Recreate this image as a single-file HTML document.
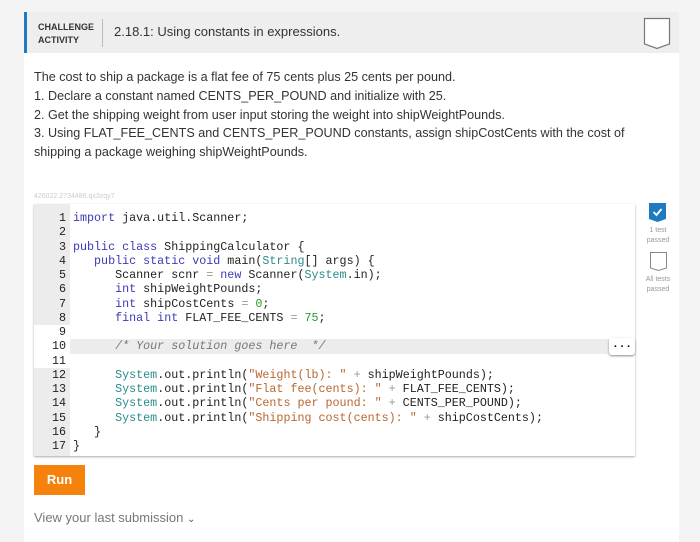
<!DOCTYPE html>
<html><head><style>
body{margin:0;width:700px;height:526px;background:#f4f4f4;font-family:"Liberation Sans",sans-serif;overflow:hidden;position:relative}
.card{position:absolute;left:24px;top:12px;width:655px;height:530px;background:#fff}
.in{position:absolute;left:0;top:3px;width:655px;height:520px}
.hdr{position:absolute;left:0;top:-3px;width:655px;height:41px;background:#eeeeee;border-left:3px solid #1f7bc1;box-sizing:border-box}
.lbl{position:absolute;left:11px;top:9px;font-size:9px;font-weight:bold;line-height:13px;color:#333}
.div{position:absolute;left:75px;top:7px;width:1px;height:28px;background:#bbb}
.ttl{position:absolute;left:87px;top:12px;font-size:13px;color:#333}
.desc{position:absolute;left:10px;top:53px;font-size:12.6px;line-height:18.8px;color:#333}
.id{position:absolute;left:10px;top:178px;font-size:7px;color:#ccc}
.ed{position:absolute;left:10px;top:189px;width:601px;height:252px;background:#fff;box-shadow:0 1px 2px #aaa;font-family:"Liberation Mono",monospace;font-size:11.7px}
.g{position:absolute;left:0;top:0;width:36px;height:252px;background:#ececec}
.w{position:absolute;left:0;width:36px;height:43px;top:121px;background:#fff}
.hl{position:absolute;left:36px;top:135px;width:565px;height:15px;background:#ececec}
.ln{position:absolute;left:0;top:7px;width:32px;text-align:right;line-height:14.25px;color:#222;white-space:pre}
.code{position:absolute;left:39px;top:7px;line-height:14.25px;color:#222;white-space:pre}
.k{color:#3d3ab8}.t{color:#2a8b8b}.s{color:#b8672f}.n{color:#2c9a2c}.c{color:#777;font-style:italic}.o{color:#999}
.dots{position:absolute;left:575px;top:134px;width:26px;height:17px;background:#fff;border-radius:3px;box-shadow:0 1px 2px #888;font-size:11px;font-weight:bold;text-align:center;line-height:14px}
.run{position:absolute;left:10px;top:450px;width:51px;height:30px;background:#f5820d;color:#fff;font-weight:bold;font-size:13px;text-align:center;line-height:30px}
.view{position:absolute;left:10px;top:495px;font-size:13px;color:#777}
.sm{position:absolute;font-size:7px;color:#999;text-align:center;width:40px;line-height:10px}
</style></head><body>
<div class="card"><div class="in">
<div class="hdr"><div class="lbl">CHALLENGE<br>ACTIVITY</div><div class="div"></div><div class="ttl">2.18.1: Using constants in expressions.</div>
<svg style="position:absolute;left:616px;top:5px" width="28" height="33"><path d="M1.5 1.5H26.5V27L14 31.5L1.5 27Z" fill="#fff" stroke="#777" stroke-width="1.2"/></svg></div>
<div class="desc">The cost to ship a package is a flat fee of 75 cents plus 25 cents per pound.<br>1. Declare a constant named CENTS_PER_POUND and initialize with 25.<br>2. Get the shipping weight from user input storing the weight into shipWeightPounds.<br>3. Using FLAT_FEE_CENTS and CENTS_PER_POUND constants, assign shipCostCents with the cost of<br>shipping a package weighing shipWeightPounds.</div>
<div class="id">426022.2734486.qx3zqy7</div>
<div class="ed"><div class="g"></div><div class="w"></div><div class="hl"></div>
<div class="ln">1
2
3
4
5
6
7
8
9
10
11
12
13
14
15
16
17</div>
<div class="code"><span class="k">import</span> java.util.Scanner;

<span class="k">public class</span> ShippingCalculator {
   <span class="k">public static void</span> main(<span class="t">String</span>[] args) {
      Scanner scnr <span class="o">=</span> <span class="k">new</span> Scanner(<span class="t">System</span>.in);
      <span class="k">int</span> shipWeightPounds;
      <span class="k">int</span> shipCostCents <span class="o">=</span> <span class="n">0</span>;
      <span class="k">final int</span> FLAT_FEE_CENTS <span class="o">=</span> <span class="n">75</span>;

      <span class="c">/* Your solution goes here  */</span>

      <span class="t">System</span>.out.println(<span class="s">"Weight(lb): "</span> <span class="o">+</span> shipWeightPounds);
      <span class="t">System</span>.out.println(<span class="s">"Flat fee(cents): "</span> <span class="o">+</span> FLAT_FEE_CENTS);
      <span class="t">System</span>.out.println(<span class="s">"Cents per pound: "</span> <span class="o">+</span> CENTS_PER_POUND);
      <span class="t">System</span>.out.println(<span class="s">"Shipping cost(cents): "</span> <span class="o">+</span> shipCostCents);
   }
}</div>
<div class="dots">...</div></div>
<svg style="position:absolute;left:625px;top:188px" width="18" height="20"><path d="M0 0H17V16L8.5 19L0 16Z" fill="#1f7bc1"/><path d="M4.5 9L7.5 12L12.5 6" fill="none" stroke="#fff" stroke-width="1.8"/></svg>
<div class="sm" style="left:614px;top:211px">1 test<br>passed</div>
<svg style="position:absolute;left:626px;top:237px" width="18" height="20"><path d="M0.5 0.5H16.5V16L8.5 18.5L0.5 16Z" fill="#fff" stroke="#888"/></svg>
<div class="sm" style="left:614px;top:260px">All tests<br>passed</div>
<div class="run">Run</div>
<div class="view">View your last submission <span style="font-size:10px;color:#555">&#8964;</span></div>
</div></div>
</body></html>
